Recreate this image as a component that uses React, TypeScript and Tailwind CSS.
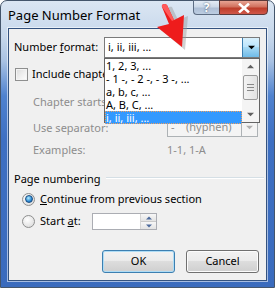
import type { FC, ReactNode } from 'react';

const font = { fontFamily: '"Noto Sans", "Open Sans", Arial, sans-serif' };

const listItems = ['1, 2, 3, ...', '- 1 -, - 2 -, - 3 -, ...', 'a, b, c, ...', 'A, B, C, ...', 'i, ii, iii, ...'];

const Triangle: FC<{ dir: 'up' | 'down'; color?: string; size?: number }> = ({ dir, color = '#000', size = 7 }) => (
  <svg width={size} height={Math.ceil(size / 2) + 1} viewBox="0 0 8 5">
    {dir === 'down' ? <path d="M0 0.5h8L4 4.5z" fill={color} /> : <path d="M0 4.5h8L4 0.5z" fill={color} />}
  </svg>
);

const RedArrow: FC = () => (
  <svg className="absolute left-[148px] top-0 pointer-events-none" width="44" height="52" viewBox="0 0 44 52">
    <path d="M17 7 C16 4 19 3 21 4 L27 17 L37 13 L34 47 L10 27 L21 24 Z" fill="#9a9a9a" opacity="0.45" transform="translate(2 2)" />
    <path d="M13 6 C12 3 16 2 18 4 L25 19 L35 14 L33 46 L8 26 L20 23 Z" fill="#ee1c1c" />
    <path d="M13 6 C12 3 16 2 18 4 L25 19 L23 20 Z" fill="#ff5a5a" />
  </svg>
);

const Radio: FC<{ checked?: boolean }> = ({ checked }) => (
  <span className="shrink-0 w-[13px] h-[13px] rounded-full border border-[#8e8f8f] bg-[radial-gradient(circle_at_40%_35%,#ffffff,#d6d6d6)] flex items-center justify-center">
    {checked && (
      <span className="w-[8px] h-[8px] rounded-full border border-[#1a4c80] bg-[radial-gradient(circle_at_40%_35%,#b5ecff,#2a8ad4_60%,#175b9f)]" />
    )}
  </span>
);

const Button: FC<{ children: ReactNode; primary?: boolean }> = ({ children, primary }) => (
  <button
    className={
      primary
        ? 'w-[73px] h-[23px] rounded-[3px] border border-[#3c7fb1] shadow-[inset_0_0_0_1px_#aedcf5] bg-[linear-gradient(#f2f2f2_0%,#ebebeb_45%,#dddddd_50%,#cfcfcf_100%)] text-[11px] text-black'
        : 'w-[73px] h-[23px] rounded-[3px] border border-[#707070] shadow-[inset_0_0_0_1px_#fcfcfc] bg-[linear-gradient(#f2f2f2_0%,#ebebeb_45%,#dddddd_50%,#cfcfcf_100%)] text-[11px] text-black'
    }
  >
    {children}
  </button>
);

const App: FC = () => {
  return (
    <div className="w-[275px] h-[288px] bg-white" style={font}>
      <div className="relative w-[275px] h-[288px] rounded-t-[7px] border border-[#44556b] bg-[linear-gradient(180deg,#dbe6f3_0px,#c6d7eb_36px,#a9c2e3_60px,#4f82cf_95px,#3d6fc2_140px,#3a6bbd_100%)] flex flex-col">
        {/* title bar */}
        <div className="h-[27px] flex items-start justify-between">
          <span className="pl-[7px] pt-[5px] text-[13px] leading-[18px] text-black whitespace-nowrap">Page Number Format</span>
          <div className="flex mr-[6px] -mt-px">
            <div className="w-[26px] h-[15px] rounded-bl-[4px] border border-[#5d6d83] border-r-0 bg-[linear-gradient(#e3ebf5_0%,#cbd8e8_45%,#aebfd6_55%,#bccde2_100%)] flex items-center justify-center text-white text-[12px] font-bold [text-shadow:0_0_2px_#34465e]">
              ?
            </div>
            <div className="w-[49px] h-[15px] rounded-br-[4px] border border-[#5d3a3a] bg-[linear-gradient(#e8a493_0%,#d1705d_45%,#bd3d2a_55%,#d0574a_100%)] flex items-center justify-center">
              <svg width="12" height="10" viewBox="0 0 12 10">
                <path d="M2 1.5l8 7M10 1.5l-8 7" stroke="#fff" strokeWidth="2.6" strokeLinecap="square" />
              </svg>
            </div>
          </div>
        </div>

        {/* client area */}
        <div className="relative mx-[7px] h-[253px] border border-[#33527f] shadow-[0_0_0_1px_rgba(255,255,255,0.55)] bg-[#f0f0f0] text-[11px] text-black whitespace-nowrap">
          {/* number format */}
          <div className="flex items-center mt-[8px] h-[21px]">
            <span className="w-[95px] pl-[5px]">
              Number <u>f</u>ormat:
            </span>
            <div className="w-[156px] h-[21px] border border-[#7a7a7a] bg-white flex items-center">
              <span className="flex-1 pl-[3px]">i, ii, iii, ...</span>
              <span className="w-[17px] h-[19px] border-l border-[#3c7fb1] bg-[linear-gradient(#d9f0fc_0%,#bde6fd_45%,#a6d9f4_50%,#6fbbe8_100%)] flex items-center justify-center">
                <Triangle dir="down" />
              </span>
            </div>
          </div>

          {/* include chapter number, partly under the open list */}
          <div className="flex items-center mt-[9px] h-[14px] pl-[6px]">
            <span className="shrink-0 w-[13px] h-[13px] border border-[#8e8f8f] bg-[linear-gradient(135deg,#dcdcdc,#ffffff)] shadow-[inset_0_0_0_1px_#f4f4f4]" />
            <span className="pl-[4px] w-[76px] overflow-hidden">Include chapter <u>n</u>umber</span>
          </div>

          <div className="flex items-center mt-[11px] h-[20px] pl-[24px] text-[#8d8d8d]">
            <span className="w-[71px] overflow-hidden">Chapter starts with style:</span>
          </div>

          <div className="flex items-center mt-[5px] h-[20px] pl-[24px] text-[#8d8d8d]">
            <span className="w-[134px] pt-[3px]">Use separator:</span>
            <div className="w-[91px] h-[20px] border border-[#adb2b5] bg-[#f4f4f4] flex items-center">
              <span className="flex-1 pl-[3px] pt-[1px]">-&nbsp;&nbsp;&nbsp;&nbsp;(hyphen)</span>
              <span className="w-[16px] h-[18px] border-l border-[#adb2b5] flex items-center justify-center">
                <Triangle dir="down" color="#b0b0b0" />
              </span>
            </div>
          </div>

          <div className="flex items-center mt-[6px] h-[14px] pl-[24px] text-[#8d8d8d]">
            <span className="w-[134px]">Examples:</span>
            <span>1-1, 1-A</span>
          </div>

          {/* page numbering */}
          <div className="flex items-center mt-[15px] h-[14px] pl-[5px]">
            <span>Page numbering</span>
            <span className="flex-1 ml-[6px] mr-[2px] mt-[-3px] border-t border-[#d5dfe5] border-b border-b-white" />
          </div>

          <div className="flex items-center mt-[6px] h-[14px] pl-[13px]">
            <Radio checked />
            <span className="pl-[5px]">
              <u>C</u>ontinue from previous section
            </span>
          </div>

          <div className="flex items-center mt-[7px] h-[17px] pl-[13px]">
            <Radio />
            <span className="pl-[5px] w-[57px]">
              Start <u>a</u>t:
            </span>
            <div className="w-[65px] h-[17px] border border-[#abadb3] bg-white flex justify-end">
              <div className="w-[16px] flex flex-col border-l border-[#d5d5d5]">
                <span className="flex-1 bg-[linear-gradient(#f7f7f7,#e3e3e3)] border-b border-[#c9c9c9] flex items-center justify-center">
                  <Triangle dir="up" color="#4d6a9c" size={6} />
                </span>
                <span className="flex-1 bg-[linear-gradient(#f7f7f7,#e3e3e3)] flex items-center justify-center">
                  <Triangle dir="down" color="#4d6a9c" size={6} />
                </span>
              </div>
            </div>
          </div>

          <div className="flex justify-end gap-[11px] mt-[20px] pr-[7px]">
            <Button primary>OK</Button>
            <Button>Cancel</Button>
          </div>

          {/* dropped down list */}
          <div className="absolute left-[95px] top-[29px] w-[156px] h-[65px] border border-[#646464] bg-white flex">
            <div className="flex-1 flex flex-col">
              {listItems.map((item, i) => (
                <div
                  key={item}
                  className={
                    i === listItems.length - 1
                      ? 'h-[13px] leading-[13px] pl-[1px] bg-[#3399ff] text-white outline-1 outline-dotted outline-[#f0a060] -outline-offset-1'
                      : 'h-[13px] leading-[13px] pl-[1px]'
                  }
                >
                  {item}
                </div>
              ))}
            </div>
            <div className="w-[17px] bg-[#f4f4f4] flex flex-col items-center">
              <span className="h-[15px] flex items-center justify-center">
                <Triangle dir="up" color="#606060" size={7} />
              </span>
              <span className="mt-px w-[15px] h-[25px] rounded-[2px] border border-[#9a9a9a] bg-[linear-gradient(90deg,#f3f3f3,#e2e2e2)] flex flex-col items-center justify-center gap-[2px]">
                <span className="w-[7px] border-t border-[#888]" />
                <span className="w-[7px] border-t border-[#888]" />
                <span className="w-[7px] border-t border-[#888]" />
              </span>
              <span className="flex-1" />
              <span className="h-[15px] flex items-center justify-center">
                <Triangle dir="down" color="#606060" size={7} />
              </span>
            </div>
          </div>
        </div>

        <RedArrow />
      </div>
    </div>
  );
};

export default App;
